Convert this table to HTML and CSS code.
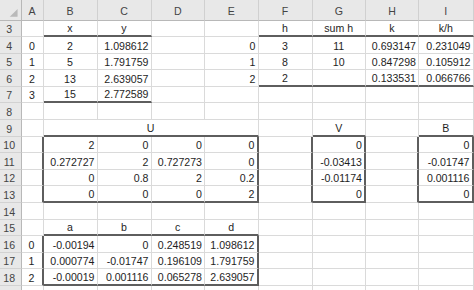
FILE: index.html
```html
<!DOCTYPE html>
<html>
<head>
<meta charset="utf-8">
<link rel="stylesheet" href="styles.css">
</head>
<body>
<div class="sheet">
  <div class="h corner"><svg width="21" height="20" viewBox="0 0 21 20"><polygon points="10,17 18,17 18,9" fill="#b9b9b9"/></svg></div>
  <div class="h">A</div><div class="h">B</div><div class="h">C</div><div class="h">D</div><div class="h">E</div><div class="h">F</div><div class="h">G</div><div class="h">H</div><div class="h">I</div><div class="h"></div>

  <div class="n">3</div><div></div><div class="c bb">x</div><div class="c bb">y</div><div></div><div></div><div class="c bb">h</div><div class="c bb">sum h</div><div class="c bb">k</div><div class="c bb">k/h</div><div></div>

  <div class="n">4</div><div class="c">0</div><div class="c">2</div><div>1.098612</div><div></div><div>0</div><div class="c">3</div><div class="c">11</div><div>0.693147</div><div>0.231049</div><div></div>

  <div class="n">5</div><div class="c">1</div><div class="c">5</div><div>1.791759</div><div></div><div>1</div><div class="c">8</div><div class="c">10</div><div>0.847298</div><div>0.105912</div><div></div>

  <div class="n">6</div><div class="c">2</div><div class="c">13</div><div>2.639057</div><div></div><div>2</div><div class="c bb">2</div><div class="bb"></div><div class="bb">0.133531</div><div class="bb">0.066766</div><div></div>

  <div class="n">7</div><div class="c">3</div><div class="c bb">15</div><div class="bb">2.772589</div><div></div><div></div><div></div><div></div><div></div><div></div><div></div>

  <div class="n">8</div><div></div><div></div><div></div><div></div><div></div><div></div><div></div><div></div><div></div><div></div>

  <div class="n">9</div><div></div><div class="c bb span4">U</div><div></div><div class="c bb">V</div><div></div><div class="c bb">B</div><div></div>

  <div class="n">10</div><div class="br"></div><div>2</div><div>0</div><div>0</div><div class="br">0</div><div class="br"></div><div class="br">0</div><div class="br"></div><div class="br">0</div><div></div>

  <div class="n">11</div><div class="br"></div><div>0.272727</div><div>2</div><div>0.727273</div><div class="br">0</div><div class="br"></div><div class="br">-0.03413</div><div class="br"></div><div class="br">-0.01747</div><div></div>

  <div class="n">12</div><div class="br"></div><div>0</div><div>0.8</div><div>2</div><div class="br">0.2</div><div class="br"></div><div class="br">-0.01174</div><div class="br"></div><div class="br">0.001116</div><div></div>

  <div class="n">13</div><div class="br"></div><div class="bb">0</div><div class="bb">0</div><div class="bb">0</div><div class="bb br">2</div><div class="br"></div><div class="bb br">0</div><div class="br"></div><div class="bb br">0</div><div></div>

  <div class="n">14</div><div></div><div></div><div></div><div></div><div></div><div></div><div></div><div></div><div></div><div></div>

  <div class="n">15</div><div></div><div class="c bb">a</div><div class="c bb">b</div><div class="c bb">c</div><div class="c bb">d</div><div></div><div></div><div></div><div></div><div></div>

  <div class="n">16</div><div class="c br">0</div><div>-0.00194</div><div>0</div><div>0.248519</div><div class="br">1.098612</div><div></div><div></div><div></div><div></div><div></div>

  <div class="n">17</div><div class="c br">1</div><div>0.000774</div><div>-0.01747</div><div>0.196109</div><div class="br">1.791759</div><div></div><div></div><div></div><div></div><div></div>

  <div class="n">18</div><div class="c br">2</div><div class="bb">-0.00019</div><div class="bb">0.001116</div><div class="bb">0.065278</div><div class="bb br">2.639057</div><div></div><div></div><div></div><div></div><div></div>

  <div class="n"></div><div></div><div></div><div></div><div></div><div></div><div></div><div></div><div></div><div></div><div></div>
</div>
</body>
</html>
```

FILE: styles.css
```css
html, body {
  margin: 0;
  padding: 0;
  background: #ffffff;
}

body {
  font-family: "Liberation Sans", Arial, sans-serif;
  font-size: 10.6px;
  color: #1e1e1e;
}

.sheet {
  display: grid;
  grid-template-columns: 21.5px 22px 54px 54px 53.5px 53.5px 54px 53.5px 53px 54.5px 30px;
  grid-template-rows: 20.5px repeat(17, 16.6px);
  width: 474px;
  height: 290px;
  overflow: hidden;
}

.sheet > div {
  box-sizing: border-box;
  border-right: 1px solid #dadada;
  border-bottom: 1px solid #dadada;
  display: flex;
  align-items: flex-end;
  justify-content: flex-end;
  padding: 0 2px 1px 2px;
  line-height: 12px;
  white-space: nowrap;
  overflow: hidden;
}

.sheet > .c {
  justify-content: center;
}

.sheet > .h {
  background: #e8e8e8;
  color: #444444;
  justify-content: center;
  align-items: center;
  padding: 3px 0 0 0;
  border-right: 1px solid #d0d0d0;
  border-bottom: 1px solid #b8b8b8;
}

.sheet > .corner {
  padding: 0;
  align-items: stretch;
  justify-content: flex-start;
  border-right: 1px solid #b8b8b8;
}

.sheet > .n {
  background: #e8e8e8;
  color: #444444;
  justify-content: center;
  padding: 0 2px 1px 0;
  border-right: 1px solid #b8b8b8;
  border-bottom: 1px solid #d2d2d2;
}

.sheet > .bb {
  border-bottom: 2px solid #5e5e5e;
}

.sheet > .br {
  border-right: 2px solid #5e5e5e;
}

.sheet > .span4 {
  grid-column: span 4;
}
```
